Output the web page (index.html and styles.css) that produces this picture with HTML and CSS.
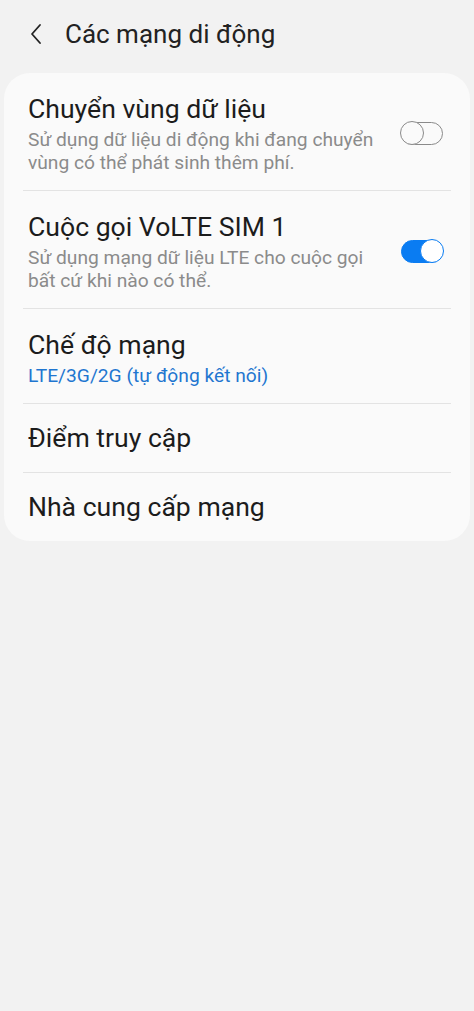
FILE: index.html
```html
<!DOCTYPE html>
<html lang="vi">
<head>
    <meta charset="UTF-8">
    <meta name="viewport" content="width=device-width, initial-scale=1.0">
    <title>Các mạng di động</title>
    <link rel="stylesheet" href="styles.css">
</head>
<body>
    <div class="header">
        <svg class="back" width="14" height="22" viewBox="0 0 14 22">
            <path d="M11 2 L3 11 L11 20" fill="none" stroke="#222" stroke-width="1.8" stroke-linecap="round" stroke-linejoin="round"/>
        </svg>
        <h1>Các mạng di động</h1>
    </div>

    <div class="card">
        <div class="row">
            <div class="text">
                <div class="title">Chuyển vùng dữ liệu</div>
                <div class="summary">Sử dụng dữ liệu di động khi đang chuyển vùng có thể phát sinh thêm phí.</div>
            </div>
            <div class="switch"><span class="thumb"></span></div>
        </div>
        <div class="row">
            <div class="text">
                <div class="title">Cuộc gọi VoLTE SIM 1</div>
                <div class="summary">Sử dụng mạng dữ liệu LTE cho cuộc gọi bất cứ khi nào có thể.</div>
            </div>
            <div class="switch on"><span class="thumb"></span></div>
        </div>
        <div class="row">
            <div class="text">
                <div class="title">Chế độ mạng</div>
                <div class="summary value">LTE/3G/2G (tự động kết nối)</div>
            </div>
        </div>
        <div class="row single">
            <div class="text">
                <div class="title">Điểm truy cập</div>
            </div>
        </div>
        <div class="row single">
            <div class="text">
                <div class="title">Nhà cung cấp mạng</div>
            </div>
        </div>
    </div>
</body>
</html>
```

FILE: styles.css
```css
body {
    margin: 0;
    background-color: #f2f2f2;
    font-family: Roboto, "Noto Sans", sans-serif;
    color: #1c1c1c;
}

.header {
    display: flex;
    align-items: center;
    height: 70px;
    padding-left: 29px;
}

.back {
    margin-right: 22px;
    margin-top: -3px;
}

h1 {
    margin: 0;
    font-size: 26px;
    font-weight: 400;
    color: #222;
    margin-top: -2px;
}

.card {
    background-color: #fafafa;
    margin: 3px 4px 0;
    border-radius: 26px;
    padding: 0 19px;
}

.row {
    display: flex;
    align-items: center;
    padding: 19px 5px 16px;
    border-bottom: 1px solid #e3e3e3;
}

.row.single {
    padding: 17px 5px;
}

.row:last-child {
    border-bottom: none;
}

.text {
    flex: 1;
}

.title {
    font-size: 26.6px;
    line-height: 34px;
}

.summary {
    font-size: 19.2px;
    line-height: 23px;
    margin-top: 2px;
    color: #8b8b8b;
    margin-right: 20px;
}

.summary.value {
    color: #1f76d0;
}

.switch {
    position: relative;
    width: 40px;
    height: 21px;
    border: 1.5px solid #8a8a8a;
    border-radius: 12px;
    margin-right: 3px;
    flex-shrink: 0;
}

.switch .thumb {
    position: absolute;
    left: -2px;
    top: -2px;
    width: 22px;
    height: 22px;
    border: 1.5px solid #8a8a8a;
    border-radius: 50%;
    background-color: #fafafa;
}

.switch.on {
    background-color: #0a7cf2;
    border-color: #0a7cf2;
}

.switch.on .thumb {
    left: auto;
    right: -2px;
    border-color: #0a7cf2;
    background-color: #fff;
}
```
